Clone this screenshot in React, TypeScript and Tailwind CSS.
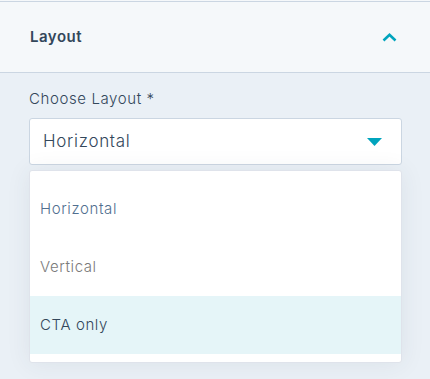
const options = [
  { label: "Horizontal", color: "text-[#516f90]", active: false },
  { label: "Vertical", color: "text-[#7a7a7a]", active: false },
  { label: "CTA only", color: "text-[#33475b]", active: true },
];

export default function App() {
  return (
    <div
      className="w-[430px] h-[379px] bg-[#eaf0f6] overflow-hidden"
      style={{ fontFamily: "Inter, 'Noto Sans', sans-serif" }}
    >
      {/* Accordion header */}
      <div className="h-px bg-[#f5f8fa]" />
      <div className="h-[72px] bg-[#f5f8fa] border-t border-b border-[#cbd6e2] flex items-center justify-between pl-[30px] pr-[33px]">
        <span className="text-[15px] font-semibold text-[#33475b] tracking-[0.5px] pt-px">Layout</span>
        <svg width="15" height="9" viewBox="0 0 15 9" fill="none">
          <path d="M1.5 7.5L7.5 1.8L13.5 7.5" stroke="#00a4bd" strokeWidth="2.6" />
        </svg>
      </div>

      {/* Field */}
      <div className="pl-[29px] pr-[28px] pt-[16px]">
        <label className="block text-[15px] leading-[20px] text-[#33475b] font-light tracking-[0.6px]">
          Choose Layout *
        </label>

        <div className="mt-[9px] h-[47px] bg-white border border-[#cbd6e2] rounded-[3px] flex items-center justify-between pl-[13px] pr-[19px]">
          <span className="text-[17px] text-[#33475b] font-light tracking-[0.7px] pt-px">Horizontal</span>
          <svg width="15" height="8" viewBox="0 0 15 8">
            <path d="M0 0H15L7.5 8Z" fill="#00a4bd" />
          </svg>
        </div>

        {/* Dropdown menu */}
        <div className="mt-[5px] h-[193px] bg-white border border-[#dfe3eb] rounded-[3px] shadow-[0_1px_24px_rgba(45,62,80,0.08)] py-[9px]">
          {options.map( ( opt ) => (
            <div
              key={opt.label}
              className={`h-[58px] flex items-center pl-[10px] pt-px text-[15px] font-light tracking-[0.6px] ${opt.color} ${opt.active ? "bg-[#e5f5f8]" : ""}`}
            >
              {opt.label}
            </div>
          ) )}
        </div>
      </div>
    </div>
  );
}
